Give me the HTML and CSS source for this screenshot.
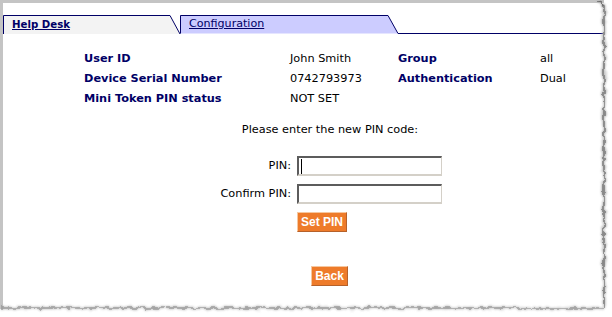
FILE: index.html
```html
<!DOCTYPE html>
<html>
<head>
<meta charset="utf-8">
<title>Help Desk</title>
<link rel="stylesheet" href="styles.css">
</head>
<body>
<div class="page">
  <div class="sheet">
    <div class="tabbar">
      <svg class="tabshape" width="600" height="19" viewBox="0 0 600 19">
        <path d="M0.5 19 V0.5 H167 L177 19 Z" fill="#f3f3f3" stroke="none"/>
        <path d="M0.5 19 V0.5 H167 L177 19" fill="none" stroke="#000066"/>
        <path d="M177.5 18.5 V0.5 H385 L395 18.5 Z" fill="#ccccff" stroke="none"/>
        <path d="M177.5 18.5 V0.5 H385 L395 18.5 H600" fill="none" stroke="#000066"/>
      </svg>
      <a class="tab tab-active">Help Desk</a>
      <a class="tab tab-link">Configuration</a>
    </div>

    <div class="info">
      <div class="lbl">User ID</div>
      <div class="val">John Smith</div>
      <div class="lbl">Group</div>
      <div class="val">all</div>
      <div class="lbl">Device Serial Number</div>
      <div class="val">0742793973</div>
      <div class="lbl">Authentication</div>
      <div class="val">Dual</div>
      <div class="lbl">Mini Token PIN status</div>
      <div class="val">NOT SET</div>
    </div>

    <div class="form">
      <div class="prompt">Please enter the new PIN code:</div>
      <div class="pinrows">
        <label class="plabel">PIN:</label>
        <span class="field field-focus"><input class="pin" type="password"></span>
        <label class="plabel">Confirm PIN:</label>
        <span class="field"><input class="pin" type="password"></span>
        <span></span>
        <span><button class="btn btn-set">Set PIN</button></span>
      </div>
      <button class="btn btn-back">Back</button>
    </div>
  </div>

  <svg class="edge" width="612" height="317" viewBox="0 0 612 317">
    <defs>
      <filter id="torn" filterUnits="userSpaceOnUse" x="0" y="0" width="612" height="317">
        <feTurbulence type="fractalNoise" baseFrequency="0.18" numOctaves="2" seed="7" result="noise"/>
        <feDisplacementMap in="SourceGraphic" in2="noise" scale="6" xChannelSelector="R" yChannelSelector="G"/>
      </filter>
      <filter id="tornsoft" filterUnits="userSpaceOnUse" x="0" y="0" width="612" height="317">
        <feTurbulence type="fractalNoise" baseFrequency="0.18" numOctaves="2" seed="7" result="noise"/>
        <feDisplacementMap in="SourceGraphic" in2="noise" scale="6" xChannelSelector="R" yChannelSelector="G" result="d"/>
        <feGaussianBlur in="d" stdDeviation="1"/>
      </filter>
    </defs>
    <path d="M596 2 Q603 2 604 6 L604 308" fill="none" stroke="#b0b0b0" stroke-width="3" filter="url(#tornsoft)"/>
    <path d="M596 2 Q603 2 604 6 L604 308" fill="none" stroke="#707070" stroke-width="1.3" filter="url(#torn)"/>
    <path d="M604 308 L1 308" fill="none" stroke="#bcbcbc" stroke-width="2.5" filter="url(#tornsoft)"/>
    <path d="M604 308 L1 308" fill="none" stroke="#858585" stroke-width="1.1" filter="url(#torn)"/>
  </svg>
</div>
</body>
</html>
```
FILE: styles.css
```css
html, body {
  margin: 0;
  padding: 0;
  background: #ffffff;
}

body {
  font-family: "DejaVu Sans", Verdana, sans-serif;
  font-size: 11.3px;
  color: #000000;
}

.page {
  position: relative;
  width: 612px;
  height: 317px;
  overflow: hidden;
  background: #ffffff;
}

.sheet {
  width: 601px;
  height: 306px;
  border-top: 3px solid #c4c4c4;
  border-left: 3px solid #c4c4c4;
  background: #ffffff;
}

/* Tabs */
.tabbar {
  position: relative;
  display: flex;
  height: 19px;
  margin-top: 12px;
}

.tabshape {
  position: absolute;
  left: 0;
  top: 0;
  display: block;
}

.tab {
  position: relative;
  color: #000066;
  text-decoration: underline;
  cursor: pointer;
}

.tab-active {
  width: 168px;
  padding-left: 9px;
  padding-top: 4px;
  font-weight: bold;
  font-size: 10.2px;
  line-height: 12px;
}

.tab-link {
  padding-left: 9px;
  padding-top: 2px;
  font-size: 11.1px;
  line-height: 13px;
}

/* Info grid */
.info {
  display: grid;
  grid-template-columns: 206px 108px 142px auto;
  grid-auto-rows: 20px;
  align-items: center;
  margin: 14px 0 0 81px;
}

.lbl {
  color: #000066;
  font-weight: bold;
}

.val {
  color: #000000;
}

/* Form */
.form {
  width: 260px;
  margin-left: 197px;
}

.prompt {
  margin-top: 14px;
  line-height: 16px;
  text-align: center;
}

.pinrows {
  display: grid;
  grid-template-columns: 91px 145px;
  column-gap: 6px;
  row-gap: 8px;
  margin-top: 18px;
}

.plabel {
  text-align: right;
  line-height: 20px;
}

.field {
  position: relative;
  display: block;
  height: 20px;
}

.pin {
  display: block;
  box-sizing: border-box;
  width: 145px;
  height: 20px;
  margin: 0;
  padding: 0 3px;
  border-style: solid;
  border-width: 2px 1px 2px 2px;
  border-color: #5c5c5c #d4d0c8 #d4d0c8 #5c5c5c;
  background: #ffffff;
  outline: none;
}

.field-focus::after {
  content: "";
  position: absolute;
  left: 4px;
  top: 3px;
  width: 1px;
  height: 15px;
  background: #000000;
}

.btn {
  display: block;
  box-sizing: border-box;
  height: 20px;
  padding: 0;
  margin: 0;
  background: #ee7b2a;
  color: #ffffff;
  font-family: "Liberation Sans", Arial, sans-serif;
  font-weight: bold;
  font-size: 12px;
  border: 1px solid;
  border-color: #f6c79f #b6612a #b6612a #f6c79f;
  cursor: pointer;
}

.btn-set {
  width: 50px;
}

.btn-back {
  width: 37px;
  margin: 34px 0 0 111px;
}

.edge {
  position: absolute;
  left: 0;
  top: 0;
  pointer-events: none;
}
```
